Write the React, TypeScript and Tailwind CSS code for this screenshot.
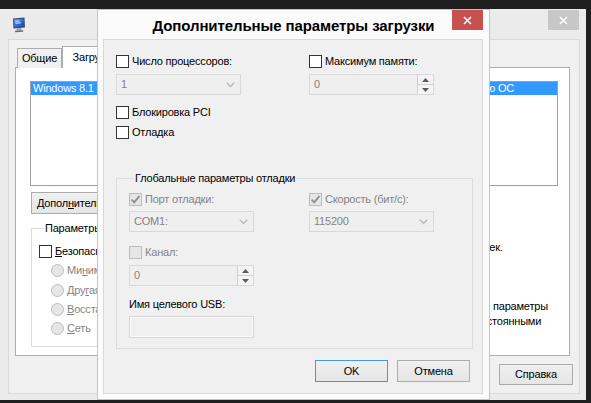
import React from "react";

type CheckProps = { checked?: boolean; disabled?: boolean };

function CheckBox({ checked = false, disabled = false }: CheckProps) {
  return (
    <span
      className={
        disabled
          ? "flex h-[13px] w-[13px] shrink-0 items-center justify-center border border-[#bcbcbc] bg-[#e6e6e6]"
          : "flex h-[13px] w-[13px] shrink-0 items-center justify-center border border-[#333333] bg-white"
      }
    >
      {checked && (
        <svg width="11" height="11" viewBox="0 0 11 11">
          <path d="M1.6 5.6 L4.2 8.3 L9.4 2.1" fill="none" stroke={disabled ? "#8f8f8f" : "#262626"} strokeWidth="1.9" />
        </svg>
      )}
    </span>
  );
}

function CheckRow({ label, checked, disabled }: { label: React.ReactNode } & CheckProps) {
  return (
    <div className="flex h-[13px] items-center gap-[3px] whitespace-nowrap">
      <CheckBox checked={checked} disabled={disabled} />
      <span className={disabled ? "leading-[13px] text-[#838383]" : "leading-[13px] text-black"}>{label}</span>
    </div>
  );
}

function Radio({ label }: { label: React.ReactNode }) {
  return (
    <div className="flex h-[13px] items-center gap-[3px] whitespace-nowrap">
      <span className="h-[13px] w-[13px] shrink-0 rounded-full border border-[#bcbcbc] bg-[#e6e6e6]" />
      <span className="leading-[13px] text-[#838383]">{label}</span>
    </div>
  );
}

function Combo({ value }: { value: string }) {
  return (
    <div className="flex h-[21px] w-[125px] items-center justify-between border border-[#d9d9d9] bg-[#efefef] pl-[4px] pr-[5px]">
      <span className="text-[#838383]">{value}</span>
      <svg width="9" height="6" viewBox="0 0 9 6">
        <path d="M0.8 0.8 L4.5 4.6 L8.2 0.8" fill="none" stroke="#b8b8b8" strokeWidth="1.4" />
      </svg>
    </div>
  );
}

function Spinner({ value }: { value: string }) {
  return (
    <div className="flex h-[21px] w-[125px] border border-[#d9d9d9] bg-[#efefef]">
      <span className="flex flex-1 items-center pl-[4px] text-[#838383]">{value}</span>
      <div className="flex w-[16px] flex-col border-l border-[#d0d0d0]">
        <div className="flex flex-1 items-center justify-center border-b border-[#d0d0d0] bg-[#f4f4f4]">
          <svg width="7" height="4" viewBox="0 0 7 4">
            <path d="M0 4 L3.5 0 L7 4z" fill="#5a5a5a" />
          </svg>
        </div>
        <div className="flex flex-1 items-center justify-center bg-[#f4f4f4]">
          <svg width="7" height="4" viewBox="0 0 7 4">
            <path d="M0 0 L7 0 L3.5 4z" fill="#5a5a5a" />
          </svg>
        </div>
      </div>
    </div>
  );
}

function CloseX() {
  return (
    <svg width="9" height="9" viewBox="0 0 9 9">
      <path d="M1 1 L8 8 M8 1 L1 8" stroke="#ffffff" strokeWidth="1.6" />
    </svg>
  );
}

function MonitorIcon() {
  return (
    <svg width="14" height="16" viewBox="0 0 14 16">
      <defs>
        <linearGradient id="scr" x1="0" y1="0" x2="1" y2="1">
          <stop offset="0" stopColor="#7fb6ff" />
          <stop offset="0.5" stopColor="#2f6fe0" />
          <stop offset="1" stopColor="#1a45b0" />
        </linearGradient>
      </defs>
      <path d="M1 1.5 L12.5 0.5 L13 10.5 L1.5 11.5 Z" fill="#3a4a70" />
      <path d="M2.2 2.6 L11.5 1.8 L11.9 9.5 L2.6 10.3 Z" fill="url(#scr)" />
      <path d="M3.5 4.5 L7.5 4 M3.7 6.3 L9 5.8" stroke="#e6f0ff" strokeWidth="0.9" />
      <path d="M5 11.5 L9 11.2 L10 13.2 L4.3 13.6 Z" fill="#9a9a9a" />
      <path d="M3 13.8 L11 13.3 L11.2 14.8 L3.2 15.3 Z" fill="#6a6a6a" />
    </svg>
  );
}

function BackWindow() {
  return (
    <div className="absolute left-0 top-[9px] flex h-[391px] w-[586px] flex-col bg-[#ebebeb]">
      {/* title bar */}
      <div className="flex h-[30px] shrink-0 justify-between">
        <div className="pl-[12px] pt-[8px]">
          <MonitorIcon />
        </div>
        <div className="flex pr-[7px] pt-[1px]">
          <div className="flex h-[20px] w-[31px] items-center justify-center bg-[#c7c7c7]">
            <CloseX />
          </div>
        </div>
      </div>
      {/* client panel */}
      <div className="ml-[8px] mr-[6px] flex h-[355px] flex-col border border-[#d9d9d9] bg-[#f0f0f0] pl-[6px] pt-[6px]">
        {/* tabs */}
        <div className="relative z-10 -mb-px flex h-[22px] items-end">
          <div className="ml-[2px] flex h-[20px] w-[45px] items-center justify-center border border-b-0 border-[#adadad] bg-[#f0f0f0]">
            Общие
          </div>
          <div className="flex h-[22px] w-[64px] items-center justify-center border border-b-0 border-[#adadad] bg-white pb-[1px]">
            Загрузка
          </div>
        </div>
        {/* tab page */}
        <div className="flex h-[289px] w-[555px] flex-col border border-[#adadad] bg-white">
          <div className="ml-[14px] mt-[13px] h-[105px] w-[528px] border border-[#a0a0a0] bg-white">
            <div className="flex h-[13px] items-center justify-between whitespace-nowrap bg-[#3399ff] pl-[2px] leading-[13px] text-white">
              <span>Windows 8.1</span>
              <span className="mr-[43px]">ю ОС</span>
            </div>
          </div>
          <div className="flex">
            {/* left column */}
            <div className="ml-[15px] flex w-[400px] flex-col items-start">
              <div className="mt-[6px] flex h-[22px] w-[170px] items-center border border-[#acacac] bg-gradient-to-b from-[#f0f0f0] to-[#e5e5e5] pl-[5px] whitespace-nowrap">
                <span>
                  Допол<u>н</u>ительные
                </span>
              </div>
              <fieldset className="mt-[8px] w-[270px] border border-[#dcdcdc] pb-[11px] pl-[7px]">
                <legend className="ml-[5px] px-[1px] leading-[13px]">Параметры</legend>
                <div className="pt-[10px]">
                  <CheckRow
                    label={
                      <>
                        <u>Б</u>езопасный
                      </>
                    }
                  />
                  <div className="ml-[12px] mt-[6px]">
                    <Radio
                      label={
                        <>
                          Ми<u>н</u>имал
                        </>
                      }
                    />
                    <div className="mt-[7px]">
                      <Radio
                        label={
                          <>
                            Дру<u>г</u>ая
                          </>
                        }
                      />
                    </div>
                    <div className="mt-[6px]">
                      <Radio
                        label={
                          <>
                            <u>В</u>осстан
                          </>
                        }
                      />
                    </div>
                    <div className="mt-[6px]">
                      <Radio
                        label={
                          <>
                            <u>С</u>еть
                          </>
                        }
                      />
                    </div>
                  </div>
                </div>
              </fieldset>
            </div>
            {/* right column */}
            <div className="flex flex-col whitespace-nowrap">
              <div className="ml-[53px] mt-[55px] leading-[13px]">сек.</div>
              <div className="mt-[45px] flex leading-[15px]">
                <span className="w-[62px] overflow-hidden text-right whitespace-pre">эти </span>
                <span>параметры</span>
              </div>
              <div className="flex leading-[15px]">
                <span className="w-[61px] overflow-hidden text-right">пос</span>
                <span>тоянными</span>
              </div>
            </div>
          </div>
        </div>
        {/* bottom buttons */}
        <div className="mr-[6px] mt-[8px] flex justify-end">
          <div className="flex h-[21px] w-[74px] items-center justify-center border border-[#acacac] bg-gradient-to-b from-[#f0f0f0] to-[#e5e5e5]">
            Справка
          </div>
        </div>
      </div>
    </div>
  );
}

function FrontDialog() {
  return (
    <div className="absolute left-[97px] top-[9px] z-20 flex h-[391px] w-[393px] flex-col border border-[#c4c4c4] bg-[#fbfbfb]">
      {/* title bar */}
      <div className="grid h-[29px] shrink-0 grid-cols-[1fr_auto_1fr]">
        <div />
        <div className="self-center pt-[2px] text-[15px] font-bold leading-[17px] tracking-[-0.1px] text-black">
          Дополнительные параметры загрузки
        </div>
        <div className="flex justify-end pr-[6px]">
          <div className="flex h-[20px] w-[31px] items-center justify-center bg-[#c75050]">
            <CloseX />
          </div>
        </div>
      </div>
      {/* content panel */}
      <div className="mb-[5px] ml-[5px] mr-[6px] flex flex-1 flex-col border border-[#d9d9d9] bg-[#f0f0f0] pl-[12px] pr-[12px] pt-[15px]">
        <div className="grid grid-cols-[193px_1fr]">
          <div className="flex flex-col">
            <CheckRow label="Число процессоров:" />
            <div className="mt-[6px]">
              <Combo value="1" />
            </div>
            <div className="mt-[11px]">
              <CheckRow label="Блокировка PCI" />
            </div>
            <div className="mt-[7px]">
              <CheckRow label="Отладка" />
            </div>
          </div>
          <div className="flex flex-col">
            <CheckRow label="Максимум памяти:" />
            <div className="mt-[6px]">
              <Spinner value="0" />
            </div>
          </div>
        </div>

        <fieldset className="mt-[33px] w-[357px] border border-[#dcdcdc] pb-[10px] pl-[12px]">
          <legend className="ml-[5px] px-[1px] leading-[13px] text-black">Глобальные параметры отладки</legend>
          <div className="grid grid-cols-[180px_1fr] pt-[8px]">
            <div className="flex flex-col">
              <CheckRow label="Порт отладки:" checked disabled />
              <div className="mt-[5px]">
                <Combo value="COM1:" />
              </div>
              <div className="mt-[14px]">
                <CheckRow label="Канал:" disabled />
              </div>
              <div className="mt-[6px]">
                <Spinner value="0" />
              </div>
              <div className="mt-[12px] whitespace-nowrap leading-[13px] text-black">Имя целевого USB:</div>
              <div className="mt-[5px] h-[22px] w-[125px] border border-[#d9d9d9] bg-[#f0f0f0] shadow-[inset_0_0_0_1px_#fafafa]" />
            </div>
            <div className="flex flex-col">
              <CheckRow label="Скорость (бит/с):" checked disabled />
              <div className="mt-[5px]">
                <Combo value="115200" />
              </div>
            </div>
          </div>
        </fieldset>

        <div className="mt-[11px] flex justify-end gap-[9px]">
          <div className="flex h-[22px] w-[73px] items-center justify-center border border-[#3c9ae8] bg-gradient-to-b from-[#f0f0f0] to-[#e5e5e5]">
            OK
          </div>
          <div className="flex h-[22px] w-[73px] items-center justify-center border border-[#acacac] bg-gradient-to-b from-[#f0f0f0] to-[#e5e5e5]">
            Отмена
          </div>
        </div>
      </div>
    </div>
  );
}

export default function App() {
  return (
    <div className="relative h-[403px] w-[591px] overflow-hidden bg-[#1f1f1f] font-['Liberation_Sans',Arial,sans-serif] text-[11px] tracking-[-0.2px] text-black">
      <BackWindow />
      <FrontDialog />
    </div>
  );
}
